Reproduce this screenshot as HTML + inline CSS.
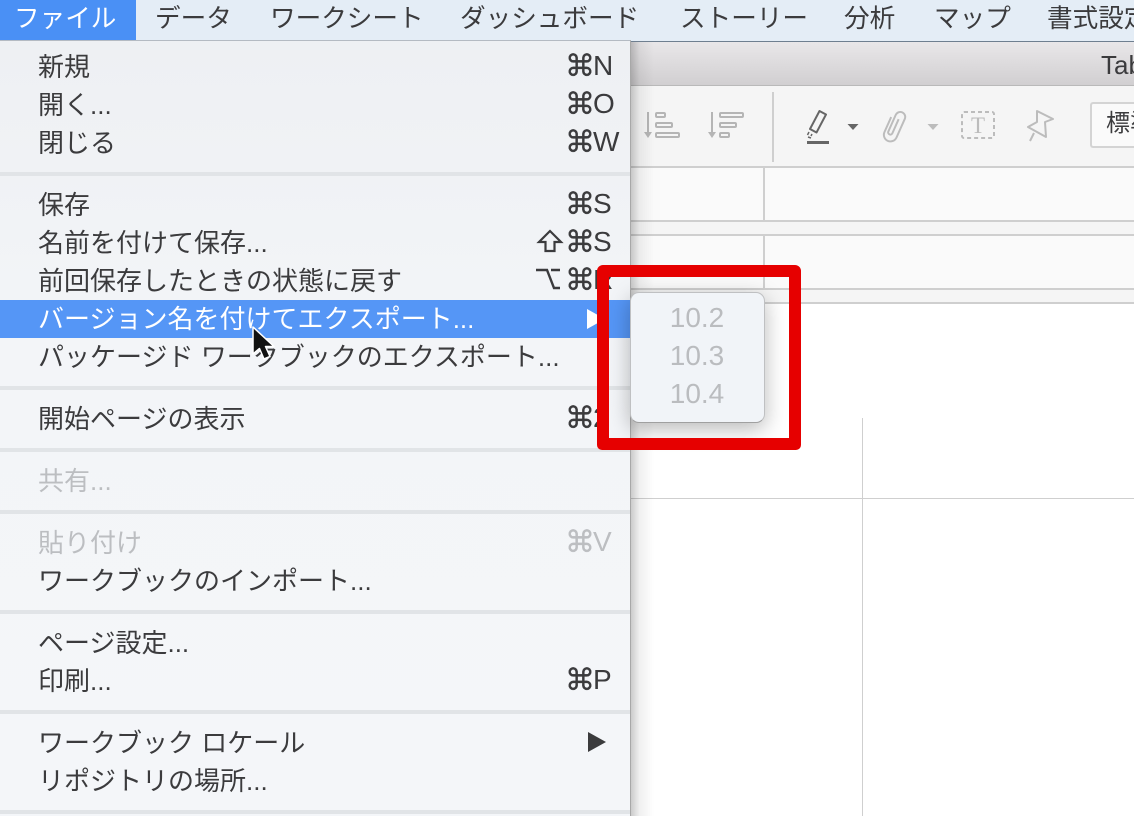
<!DOCTYPE html>
<html lang="ja"><head><meta charset="utf-8"><style>
html,body{margin:0;padding:0;width:1134px;height:816px;overflow:hidden;background:#fff}
body{position:relative;font-family:"Liberation Sans","Noto Sans CJK JP",sans-serif;color:#3b3b3d}
div{position:absolute;box-sizing:border-box}
.m{top:0;height:40px;line-height:38px;font-size:25.6px;white-space:nowrap}
.t{left:38px;height:38px;line-height:38px;font-size:26px;white-space:nowrap}
.k{left:566px;height:38px;line-height:38px;font-size:28px;white-space:nowrap}
.k b{font:400 30px/30px "DejaVu Sans",sans-serif;display:inline-block;width:27px;position:relative;top:1px;left:-1px;-webkit-text-stroke:.3px currentColor}
.s{left:0;width:630px;height:4px;background:#e1e4e7}
.g{background:#cfcfcf}
.d{color:#bcbec1}
.v{left:630px;width:134px;text-align:center;height:38px;line-height:38px;font-size:28px;color:#babcbf}
</style></head><body>
<!-- app window -->
<div style="left:0;top:41px;width:1134px;height:1px;background:#6f7f90"></div>
<div style="left:0;top:42px;width:1134px;height:43px;background:linear-gradient(#e9e7e9,#d1cfd1)"></div>
<div style="left:0;top:85px;width:1134px;height:1px;background:#b9b9b9"></div>
<div style="left:0;top:86px;width:1134px;height:81px;background:#f5f5f5"></div>
<div class="g" style="left:0;top:166px;width:1134px;height:2px"></div>
<div style="left:0;top:168px;width:1134px;height:52px;background:#fafafa"></div>
<div class="g" style="left:0;top:220px;width:1134px;height:2px"></div>
<div style="left:0;top:222px;width:1134px;height:12px;background:#f5f5f5"></div>
<div class="g" style="left:0;top:234px;width:1134px;height:2px"></div>
<div style="left:0;top:236px;width:1134px;height:52px;background:#fafafa"></div>
<div class="g" style="left:0;top:288px;width:1134px;height:2px"></div>
<div style="left:0;top:290px;width:1134px;height:12px;background:#f5f5f5"></div>
<div class="g" style="left:0;top:302px;width:1134px;height:2px"></div>
<div class="g" style="left:763px;top:168px;width:2px;height:52px"></div>
<div class="g" style="left:763px;top:236px;width:2px;height:52px"></div>
<div class="g" style="left:772px;top:92px;width:2px;height:70px"></div>
<div class="g" style="left:862px;top:418px;width:1px;height:398px"></div>
<div class="g" style="left:630px;top:498px;width:504px;height:1px"></div>
<div style="left:1101px;top:46px;width:33px;height:38px;overflow:hidden;font-size:26px;line-height:38px;white-space:nowrap">Tableau</div>
<div style="left:1090px;top:102px;width:44px;height:46px;border:2px solid #d4d4d4;border-right:0;border-radius:3px 0 0 3px;background:#fafafa"></div>
<div style="left:1106px;top:105px;width:28px;height:38px;overflow:hidden;font-size:24px;line-height:38px;white-space:nowrap">標準</div>
<svg style="position:absolute;left:630px;top:95px" width="430" height="60" viewBox="0 0 430 60" fill="none">
 <g stroke="#b5b5b5" stroke-width="2">
  <path d="M18 17V38"/><path d="M14 37h8l-4 6z" fill="#b5b5b5" stroke="none"/>
  <rect x="26" y="18" width="9" height="4" rx="1"/><rect x="26" y="28" width="16" height="4" rx="1"/><rect x="26" y="38" width="23" height="4" rx="1"/>
  <path d="M82 17V38"/><path d="M78 37h8l-4 6z" fill="#b5b5b5" stroke="none"/>
  <rect x="90" y="18" width="23" height="4" rx="1"/><rect x="90" y="28" width="16" height="4" rx="1"/><rect x="90" y="38" width="9" height="4" rx="1"/>
 </g>
 <path d="M189.500 16l6.500 3.500-9.500 18-6.500-3.500z" stroke="#666" stroke-width="2" stroke-linejoin="round"/>
 <path d="M179 37l-1.500 3M182 39l-1 2M178 42l3 1" stroke="#666" stroke-width="1.500"/>
 <rect x="177" y="46" width="22" height="3" fill="#666"/>
 <path d="M217.500 29h11l-5.500 6z" fill="#666"/>
 <g transform="translate(265 31) rotate(24) scale(1.1)"><path d="M-6.500 -6V9a6 6 0 0 0 12 0V-9.500a4.500 4.500 0 0 0-9 0V7a2 2 0 0 0 4 0V-7" stroke="#bcbcbc" stroke-width="1.800"/></g>
 <path d="M297.500 29h11l-5.500 6z" fill="#bcbcbc"/>
 <rect x="332" y="17" width="32" height="26" rx="2" stroke="#bcbcbc" stroke-width="2" stroke-dasharray="4 3"/>
 <text x="348" y="38" text-anchor="middle" font-family="Liberation Serif" font-size="23" fill="#bcbcbc">T</text>
 <path d="M407 16l16 8-8 3 1 15-18-10 9-5z" stroke="#bcbcbc" stroke-width="2" stroke-linejoin="round"/>
 <path d="M404 38l-4 8" stroke="#bcbcbc" stroke-width="2"/>
</svg>
<!-- menu shadow -->
<div style="left:630px;top:42px;width:24px;height:774px;background:linear-gradient(90deg,rgba(0,0,0,.22),rgba(0,0,0,.06) 40%,rgba(0,0,0,0))"></div>
<!-- menubar -->
<div style="left:0;top:0;width:1134px;height:41px;background:#e4edf6"></div>
<div style="left:0;top:0;width:136px;height:40px;background:#4a90f5"></div>
<div class="m" style="left:14px;color:#fff">ファイル</div>
<div class="m" style="left:155px">データ</div>
<div class="m" style="left:270px">ワークシート</div>
<div class="m" style="left:460px">ダッシュボード</div>
<div class="m" style="left:680px">ストーリー</div>
<div class="m" style="left:844px">分析</div>
<div class="m" style="left:934px">マップ</div>
<div class="m" style="left:1047px;width:87px;overflow:hidden">書式設定</div>
<!-- menu -->
<div style="left:0;top:40px;width:631px;height:776px;background:linear-gradient(#eef0f3,#f3f5f8 40%,#f4f6f9);border-top:1px solid #b4bac2;border-right:1px solid #a8a8a8"></div>
<div class="s" style="top:172px"></div>
<div class="s" style="top:386px"></div>
<div class="s" style="top:448px"></div>
<div class="s" style="top:510px"></div>
<div class="s" style="top:610px"></div>
<div class="s" style="top:710px"></div>
<div class="s" style="top:810px"></div>
<div style="left:0;top:300px;width:630px;height:38px;background:#5596f6"></div>

<div class="t" style="top:48px">新規</div><div class="k" style="top:47px"><b>⌘</b>N</div>
<div class="t" style="top:86px">開く...</div><div class="k" style="top:85px"><b>⌘</b>O</div>
<div class="t" style="top:124px">閉じる</div><div class="k" style="top:123px"><b>⌘</b>W</div>
<div class="t" style="top:186px">保存</div><div class="k" style="top:185px"><b>⌘</b>S</div>
<div class="t" style="top:224px">名前を付けて保存...</div><div class="k" style="top:223px"><b>⌘</b>S</div>
<svg style="position:absolute;left:536px;top:228px" width="28" height="26" fill="none"><path d="M14 3L3 14H9.500V23H18.500V14H25z" stroke="#3b3b3d" stroke-width="2.200" stroke-linejoin="miter"/></svg>
<div class="t" style="top:262px">前回保存したときの状態に戻す</div><div class="k" style="top:261px"><b>⌘</b>R</div>
<svg style="position:absolute;left:536px;top:268px" width="26" height="24" fill="none"><path d="M0 2H11L18 20H24M15 2H24" stroke="#3b3b3d" stroke-width="2.400"/></svg>
<div class="t" style="top:300px;color:#fff">バージョン名を付けてエクスポート...</div>
<svg style="position:absolute;left:587px;top:309px" width="20" height="20"><path d="M0 0L18 10L0 20z" fill="#fff"/></svg>
<div class="t" style="top:338px">パッケージド ワークブックのエクスポート...</div>
<div class="t" style="top:400px">開始ページの表示</div><div class="k" style="top:399px"><b>⌘</b>2</div>
<div class="t d" style="top:462px">共有...</div>
<div class="t d" style="top:524px">貼り付け</div><div class="k d" style="top:523px"><b>⌘</b>V</div>
<div class="t" style="top:562px">ワークブックのインポート...</div>
<div class="t" style="top:624px">ページ設定...</div>
<div class="t" style="top:662px">印刷...</div><div class="k" style="top:661px"><b>⌘</b>P</div>
<div class="t" style="top:724px">ワークブック ロケール</div>
<svg style="position:absolute;left:588px;top:732px" width="18" height="20"><path d="M0 0L18 10L0 20z" fill="#3b3b3d"/></svg>
<div class="t" style="top:762px">リポジトリの場所...</div>
<!-- cursor -->
<svg style="position:absolute;left:250px;top:326px" width="34" height="38" viewBox="0 0 34 38"><path d="M3 1V28L9.500 22.500L14 33L20 30.500L15.500 20.500H24z" fill="#111" stroke="#fff" stroke-width="1.500" stroke-linejoin="round"/></svg>
<!-- submenu -->
<div style="left:630px;top:292px;width:135px;height:131px;border-radius:9px;background:#f1f4f8;border:1px solid #bfc0c2;border-bottom-color:#a0a0a0;box-shadow:0 6px 22px rgba(0,0,0,.28)"></div>
<div class="v" style="top:299px">10.2</div>
<div class="v" style="top:337px">10.3</div>
<div class="v" style="top:375px">10.4</div>
<!-- red box -->
<div style="left:597px;top:265px;width:204px;height:185px;border:12px solid #e60000;border-radius:6px 6px 5px 5px"></div>
</body></html>
